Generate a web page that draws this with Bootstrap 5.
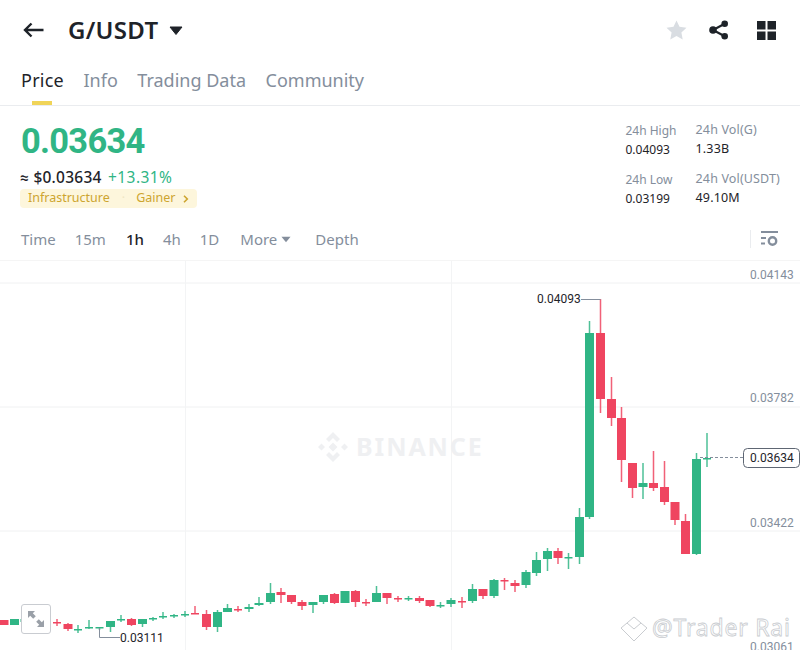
<!DOCTYPE html>
<html lang="en">
<head>
  <meta charset="UTF-8" />
  <meta name="viewport" content="width=device-width, initial-scale=1.0" />
  <title>G/USDT</title>
  <link href="https://cdn.jsdelivr.net/npm/bootstrap@5.3.0/dist/css/bootstrap.min.css" rel="stylesheet">
  <style>
    html, body { height: 100%; overflow: hidden; }
    body { font-family: "Noto Sans", Roboto, sans-serif; color: #1e2329; background: #fff; }
    .screen { height: 650px; }
    .top-bar { height: 60px; padding: 0 24px 0 23px; }
    .pair-name { font-size: 24px; font-weight: 600; letter-spacing: .3px; margin-left: 24px; line-height: 1; }
    .pair-caret { margin-left: 11px; }
    .star-icon { margin-right: 22px; }
    .share-icon { margin-right: 28px; }
    .tab-row { height: 46px; padding-left: 21px; gap: 19.5px; border-bottom: 1px solid #eaecef; }
    .tab-item { font-size: 18px; color: #848e9c; line-height: 41px; position: relative; }
    .tab-item.is-active { color: #1e2329; letter-spacing: .25px; }
    .tab-item.is-active::after { content: ""; position: absolute; left: 11px; bottom: 0; width: 20px; height: 4px; background: #f0d458; }
    .summary { height: 114px; padding: 15px 20px 0 20px; }
    .last-price { font-family: Roboto, sans-serif; font-size: 34.5px; font-weight: 700; color: #30b585; line-height: 40px; letter-spacing: -.75px; margin-left: 1px; }
    .approx { font-size: 15.5px; font-weight: 500; line-height: 20px; margin-top: 6px; letter-spacing: .25px; }
    .approx-up { color: #30b585; margin-left: 2px; font-weight: 400; letter-spacing: .45px; }
    .tag-strip { display: flex; width: fit-content; align-items: center; height: 19px; margin-top: 2px; padding: 0 8px; font-size: 12.5px; color: #cda52f; background: #fdf6dc; border-radius: 4px; }
    .tag-gap { margin: 0 11px 0 12px; color: #efe6c4; }
    .stats { gap: 19px; }
    .stats-wide { margin-top: -1px; letter-spacing: .15px; }
    .stat-label { font-size: 12px; color: #848e9c; line-height: 19px; }
    .stat-value { font-size: 12px; color: #1e2329; line-height: 19px; margin-bottom: 11px; }
    .stats-wide .stat-label, .stats-wide .stat-value { font-size: 12.5px; }
    .range-row { height: 40px; padding: 0 21px 2px; font-size: 15px; color: #848e9c; }
    .range-row span.r1 { margin-right: 19px; }
    .range-row .on { color: #1e2329; font-weight: 500; margin-left: 1px; }
    .more-item { margin-left: 2px; }
    .depth-item { margin-left: 24px; }
    .range-gear { border-left: 1px solid #eaecef; height: 18px; padding-left: 10px; margin-right: 1px; }
    .chart-box { position: relative; flex: 1 1 auto; border-top: 1px solid #f5f5f5; overflow: hidden; }
    .chart-box svg.plot { display: block; width: 800px; height: 389px; }
    .expand-btn { position: absolute; left: 21px; top: 343px; width: 30px; height: 30px; background: #fff; border: 1px solid #c9ccd1; border-radius: 3px; }
    .axis-text { font-family: Roboto, sans-serif; font-size: 12px; fill: #848e9c; }
    .mark-text { font-family: Roboto, sans-serif; font-size: 12px; fill: #1e2329; }
    .brand-text { font-family: "Noto Sans", sans-serif; font-size: 25px; font-weight: 700; letter-spacing: 1.9px; fill: #eff0f2; }
    .sign-text { font-family: "Noto Sans", sans-serif; font-size: 23px; fill: #fff; stroke: #c9ccd0; stroke-width: .8px; letter-spacing: .8px; }
  </style>
</head>
<body>
  <div class="screen d-flex flex-column">
    <div class="top-bar d-flex align-items-center">
      <svg width="21" height="16" viewBox="0 0 21 16"><path d="M20.5 8H2M8.500 1.500 2 8l6.500 6.500" fill="none" stroke="#1e2329" stroke-width="2.400"/></svg>
      <span class="pair-name">G/USDT</span>
      <svg class="pair-caret" width="14" height="9" viewBox="0 0 14 9"><path d="M1 1h12L7 8.500z" fill="#1e2329" stroke="#1e2329" stroke-linejoin="round"/></svg>
      <div class="d-flex align-items-center ms-auto">
        <svg class="star-icon" width="21" height="20" viewBox="0 0 21 20"><path d="M10.500 .5l3 6.300 7 .9-5.100 4.800 1.300 6.900-6.200-3.400-6.200 3.400 1.300-6.900L.5 7.700l7-.9z" fill="#d9dde2"/></svg>
        <svg class="share-icon" width="20" height="20" viewBox="0 0 20 20"><g fill="#1e2329"><circle cx="4" cy="10" r="3.800"/><circle cx="15.700" cy="3.800" r="3.300"/><circle cx="15.700" cy="16.200" r="3.300"/></g><path d="M15.700 3.800 4 10l11.700 6.200" fill="none" stroke="#1e2329" stroke-width="2.200"/></svg>
        <svg width="19" height="19" viewBox="0 0 19 19"><path d="M0 0h8.500v8.500H0zM10.500 0H19v8.500h-8.500zM0 10.500h8.500V19H0zM10.500 10.500H19V19h-8.500z" fill="#1e2329"/></svg>
      </div>
    </div>

    <div class="tab-row d-flex">
      <span class="tab-item is-active">Price</span>
      <span class="tab-item">Info</span>
      <span class="tab-item">Trading Data</span>
      <span class="tab-item">Community</span>
    </div>

    <div class="summary d-flex justify-content-between">
      <div>
        <div class="last-price">0.03634</div>
        <div class="approx">≈ $0.03634 <span class="approx-up">+13.31%</span></div>
        <div class="tag-strip">Infrastructure<span class="tag-gap">·</span><span>Gainer</span>
          <svg class="ms-2" width="6" height="8" viewBox="0 0 6 8"><path d="M1 .8 4.300 4 1 7.200" fill="none" stroke="#cda52f" stroke-width="1.600"/></svg>
        </div>
      </div>
      <div class="stats d-flex">
        <div>
          <div class="stat-label">24h High</div><div class="stat-value">0.04093</div>
          <div class="stat-label">24h Low</div><div class="stat-value">0.03199</div>
        </div>
        <div class="stats-wide">
          <div class="stat-label">24h Vol(G)</div><div class="stat-value">1.33B</div>
          <div class="stat-label">24h Vol(USDT)</div><div class="stat-value">49.10M</div>
        </div>
      </div>
    </div>

    <div class="range-row d-flex align-items-center">
      <span class="r1">Time</span><span class="r1">15m</span><span class="r1 on">1h</span><span class="r1">4h</span><span class="r1">1D</span>
      <span class="more-item">More</span>
      <svg class="ms-1" width="10" height="7" viewBox="0 0 11 7"><path d="M.5.5h10L5.500 6.500z" fill="#848e9c"/></svg>
      <span class="depth-item">Depth</span>
      <div class="range-gear ms-auto d-flex align-items-center">
        <svg width="17" height="16" viewBox="0 0 17 16"><path d="M0 1h17M0 7h5M0 12.500h4" stroke="#848e9c" stroke-width="1.800" fill="none"/><circle cx="11.500" cy="10" r="3.700" fill="none" stroke="#848e9c" stroke-width="2.400"/></svg>
      </div>
    </div>

    <div class="chart-box">
      <svg class="plot" id="plot" viewBox="0 261 800 389" xmlns="http://www.w3.org/2000/svg"></svg>
      <div class="expand-btn d-flex align-items-center justify-content-center">
        <svg width="20" height="20" viewBox="0 0 20 20"><path d="M2 2h7L6.800 4.200l3 3-2.600 2.600-3-3L2 9zM18 18h-7l2.200-2.200-3-3 2.600-2.600 3 3L18 11z" fill="#9aa0a8"/></svg>
      </div>
    </div>
  </div>

  <script>
    const GREEN = '#30b585', RED = '#ef4560';
    // x, color, body top, body bottom, wick top, wick bottom. thin candles use a 2px body
    const candles = [
      [4,'r',620,625,620,625],[14.5,'g',619,625,619,625],[25,'g',619,622,617,624],[36,'r',618,622,616,625],[46,'r',616,621,612,624],
      [57,'r',622,623,619,626],[68,'r',624,629,623,631],[78,'g',629,630,625,633],[89,'g',627,628,620,629],[99.5,'g',627,628,627,630],
      [110.500,'g',621,627,621,632],[121,'g',619,620,615,622],[131.500,'r',619,625,618,626],[142.500,'g',619,624,619,627],[153,'g',618,619,617,621],
      [163,'g',616,617,612,619],[174,'g',615,616,614,618],[185,'g',614,615,611,617],[195,'r',613,614,606,614],[206.500,'r',614,627,610,630],
      [217.500,'g',612,627,610,632],[227.500,'g',608,612,604,612],[238,'r',609,610,606,612],[249,'g',607,609,604,612],[259,'g',603,605,597,606],
      [270.500,'g',593,602,583,604],[281,'r',592,595,588,603],[291.500,'r',595,602,595,604],[302,'r',602,606,600,610],[313,'g',602,605,602,613],
      [323.500,'g',595,602,595,604],[334.500,'r',594,603,593,604],[345,'g',591,603,591,603],[355.500,'r',591,602,590,607],[366,'r',602,603,599,606],
      [376.500,'g',593,602,586,602],[387,'r',593,598,593,604],[398,'r',598,599,596,602],[408.500,'g',598,599,596,601],[419.500,'r',598,601,596,603],
      [430,'r',600,606,600,607],[440.500,'g',605,606,602,608],[451,'g',600,604,598,607],[462,'r',601,602,597,608],[472.500,'g',589,601,584,603],
      [483,'r',589,596,589,599],[494,'g',580,596,579,598],[504.500,'r',580,581,578,590],[515,'r',583,586,580,592],[526,'g',572,585,570,588],
      [536.500,'g',560,573,552,576],[547.500,'g',551,559,548,571],[558,'r',551,558,548,564],[568.500,'g',557,558,553,569],[579.500,'g',517,557,508,564],
      [589.500,'g',333,517,321,519],[600.500,'r',333,399,299,413],[611.500,'r',399,418,377,426],[621.500,'r',418,460,407,482],[632.500,'r',463,488,463,498],
      [643,'g',483,487,463,499],[653.500,'r',483,488,451,491],[664.500,'r',487,502,461,505],[675,'r',502,520,502,525],[685.500,'r',521,554,514,554],
      [696.500,'g',459,554,453,555],[707,'g',458,459,433,467]
    ];

    let out = '';
    // grid
    [283, 407, 531].forEach(y => { out += `<line x1="0" x2="800" y1="${y}" y2="${y}" stroke="#f0f1f2"/>`; });
    [185.500, 451.500].forEach(x => { out += `<line x1="${x}" x2="${x}" y1="261" y2="650" stroke="#f3f4f5"/>`; });

    // watermark
    out += `<g fill="#eff0f2" transform="translate(333 447)">
      <path d="M0-15 7-8 4-5 0-9-4-5-7-8zM0 15-7 8-4 5 0 9 4 5 7 8zM-15 0l3.500-3.500L-8 0l-3.500 3.500zM15 0l-3.500-3.500L8 0l3.500 3.500zM0-4.500 4.500 0 0 4.500-4.500 0z"/></g>`;
    out += `<text class="brand-text" x="356" y="456">BINANCE</text>`;

    // candles
    candles.forEach(c => {
      const col = c[1] === 'g' ? GREEN : RED;
      const thin = c[3] - c[2] < 2;
      const w = thin ? 8 : 9;
      out += `<rect x="${c[0] - 0.75}" y="${c[4]}" width="1.500" height="${c[5] - c[4]}" fill="${col}" opacity=".85"/>`;
      out += `<rect x="${c[0] - w / 2}" y="${c[2]}" width="${w}" height="${Math.max(c[3] - c[2], 1.5)}" fill="${col}"/>`;
    });

    // axis
    [[279,'0.04143'],[402,'0.03782'],[527,'0.03422'],[651,'0.03061']].forEach(a => {
      out += `<text class="axis-text" x="750" y="${a[0]}">${a[1]}</text>`;
    });

    // high / low marks
    out += `<path d="M581 299.500h19.500" stroke="#848e9c" fill="none"/><text class="mark-text" x="537" y="303">0.04093</text>`;
    out += `<path d="M99.500 628v9.500H120" stroke="#848e9c" fill="none"/><text class="mark-text" x="120" y="642">0.03111</text>`;

    // last price
    out += `<line x1="700" x2="743" y1="457.500" y2="457.500" stroke="#848e9c" stroke-dasharray="3 2"/>`;
    out += `<rect x="743.500" y="448.500" width="56" height="19" rx="4" fill="#fff" stroke="#5e6673"/>`;
    out += `<text class="mark-text" x="750" y="462">0.03634</text>`;

    // @Trader Rai stamp
    out += `<g fill="none" stroke="#c9ccd0" stroke-width="1" transform="translate(634 628)">
      <path d="M-13 0 0 13 13 0M-13 0-7-5 0 1 7-5 13 0M-7-5 0-11 7-5"/></g>`;
    out += `<text class="sign-text" x="652" y="636">@Trader Rai</text>`;

    document.getElementById('plot').innerHTML = out;
  </script>
  <script src="https://cdn.jsdelivr.net/npm/bootstrap@5.3.0/dist/js/bootstrap.bundle.min.js"></script>
</body>
</html>
